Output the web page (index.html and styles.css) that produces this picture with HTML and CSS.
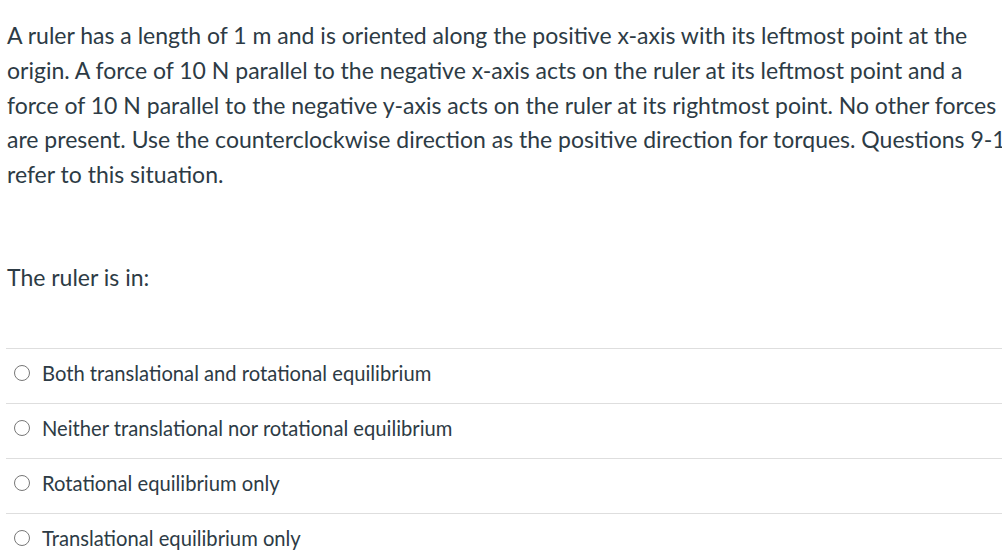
FILE: index.html
```html
<!DOCTYPE html>
<html>
<head>
<meta charset="utf-8">
<link rel="stylesheet" href="styles.css">
</head>
<body>
<div class="question">
  <p class="stem">A ruler has a length of 1 m and is oriented along the positive x-axis with its leftmost point at the origin. A force of 10 N parallel to the negative x-axis acts on the ruler at its leftmost point and a force of 10 N parallel to the negative y-axis acts on the ruler at its rightmost point. No other forces are present. Use the counterclockwise direction as the positive direction for torques. Questions 9-12 refer to this situation.</p>
  <p class="prompt">The ruler is in:</p>
  <div class="answers">
    <label class="answer"><span class="radio"></span><span class="label">Both translational and rotational equilibrium</span></label>
    <label class="answer"><span class="radio"></span><span class="label">Neither translational nor rotational equilibrium</span></label>
    <label class="answer"><span class="radio"></span><span class="label">Rotational equilibrium only</span></label>
    <label class="answer"><span class="radio"></span><span class="label">Translational equilibrium only</span></label>
  </div>
</div>
</body>
</html>
```
FILE: styles.css
```css
html, body {
  margin: 0;
  padding: 0;
  overflow: hidden;
  background: #ffffff;
}
body {
  font-family: Lato, "Liberation Sans", sans-serif;
  color: #2d3b45;
}
.question {
  width: 1012.5px;
  padding-left: 7px;
}
.stem {
  margin: 18px 0 0 0;
  font-size: 23px;
  line-height: 34.75px;
}
.prompt {
  margin: 68px 0 0 0;
  font-size: 23px;
  line-height: 34.75px;
}
.answers {
  margin-top: 53px;
  margin-left: -1px;
}
.answer {
  display: flex;
  align-items: center;
  height: 54px;
  border-top: 1px solid #dedede;
  font-size: 20.2px;
}
.radio {
  width: 14px;
  height: 14px;
  border: 1.5px solid #777777;
  border-radius: 50%;
  margin: 0 12.5px 5px 7.5px;
  flex: none;
}
.label {
  line-height: 27px;
  margin-bottom: 5px;
}
```
